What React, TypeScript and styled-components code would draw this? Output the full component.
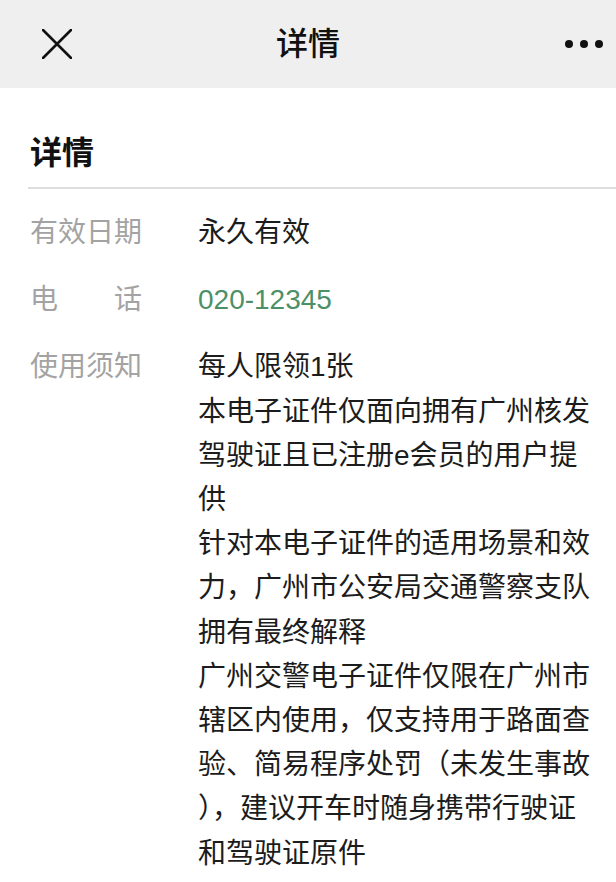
import React from "react";
import styled, { createGlobalStyle } from "styled-components";

const GlobalStyle = createGlobalStyle`
  html, body {
    margin: 0;
    padding: 0;
    background: #ffffff;
  }
  body {
    font-family: "Liberation Sans", "Noto Sans CJK SC", sans-serif;
    -webkit-font-smoothing: antialiased;
  }
`;

const Page = styled.div`
  width: 616px;
  min-height: 882px;
  background: #ffffff;
`;

const NavBar = styled.header`
  height: 88px;
  background: #efefef;
  display: grid;
  grid-template-columns: 1fr auto 1fr;
  align-items: center;
  padding: 0 13px;
  box-sizing: border-box;
`;

const NavTitle = styled.h1`
  margin: 0;
  font-size: 32px;
  font-weight: 500;
  color: #111111;
  line-height: 44px;
`;

const NavLeft = styled.div`
  display: flex;
  align-items: center;
  padding-left: 29px;
`;

const NavRight = styled.div`
  display: flex;
  justify-content: flex-end;
  align-items: center;
  gap: 7px;
`;

const Dot = styled.span`
  width: 8px;
  height: 8px;
  border-radius: 50%;
  background: #111111;
`;

const Content = styled.main`
  padding-left: 28px;
`;

const SectionTitle = styled.h2`
  margin: 0;
  padding: 43px 0 12px 2px;
  font-size: 32px;
  font-weight: 700;
  line-height: 44px;
  color: #111111;
  border-bottom: 2px solid #dedede;
`;

const InfoList = styled.dl`
  margin: 0;
  padding: 22px 0 0 2px;
  display: grid;
  grid-template-columns: 168px 1fr;
  row-gap: 23px;
`;

const Label = styled.dt`
  width: 112px;
  font-size: 28px;
  line-height: 44px;
  color: #a3a3a3;
  text-align: justify;
  text-align-last: justify;
`;

const Value = styled.dd<{ $accent?: boolean }>`
  margin: 0;
  font-size: 28px;
  line-height: 44.2px;
  color: ${(p) => (p.$accent ? "#4c9068" : "#1c1c1c")};
`;

const Line = styled.div`
  white-space: nowrap;
`;

const CloseIcon = () => (
  <svg width="30" height="30" viewBox="0 0 30 30" fill="none">
    <path d="M1 1 L29 29 M29 1 L1 29" stroke="#111" strokeWidth="2.6" strokeLinecap="round" />
  </svg>
);

const notice = [
  "每人限领1张",
  "本电子证件仅面向拥有广州核发",
  "驾驶证且已注册e会员的用户提",
  "供",
  "针对本电子证件的适用场景和效",
  "力，广州市公安局交通警察支队",
  "拥有最终解释",
  "广州交警电子证件仅限在广州市",
  "辖区内使用，仅支持用于路面查",
  "验、简易程序处罚（未发生事故",
  "），建议开车时随身携带行驶证",
  "和驾驶证原件",
];

export default function App() {
  return (
    <>
      <GlobalStyle />
      <Page>
        <NavBar>
          <NavLeft>
            <CloseIcon />
          </NavLeft>
          <NavTitle>详情</NavTitle>
          <NavRight>
            <Dot />
            <Dot />
            <Dot />
          </NavRight>
        </NavBar>
        <Content>
          <SectionTitle>详情</SectionTitle>
          <InfoList>
            <Label>有效日期</Label>
            <Value>永久有效</Value>
            <Label>电话</Label>
            <Value $accent>020-12345</Value>
            <Label>使用须知</Label>
            <Value>
              {notice.map((l, i) => (
                <Line key={i}>{l}</Line>
              ))}
            </Value>
          </InfoList>
        </Content>
      </Page>
    </>
  );
}
